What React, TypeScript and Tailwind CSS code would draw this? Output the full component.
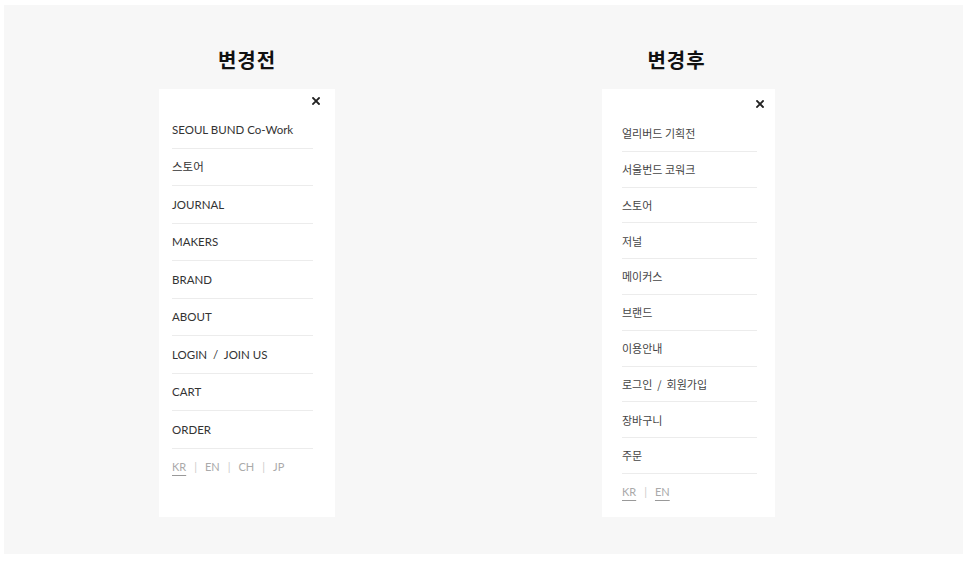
import React from "react";

const leftItems = [
  "SEOUL BUND Co-Work",
  "스토어",
  "JOURNAL",
  "MAKERS",
  "BRAND",
  "ABOUT",
  "LOGIN  /  JOIN US",
  "CART",
  "ORDER",
];

const rightItems = [
  "얼리버드 기획전",
  "서울번드 코워크",
  "스토어",
  "저널",
  "메이커스",
  "브랜드",
  "이용안내",
  "로그인  /  회원가입",
  "장바구니",
  "주문",
];

function CloseX() {
  return (
    <svg width="8" height="8" viewBox="0 0 8 8" className="block">
      <path d="M1 1 L7 7 M7 1 L1 7" stroke="#222" strokeWidth="1.8" strokeLinecap="square" />
    </svg>
  );
}

export default function App() {
  const font = { fontFamily: "Lato, 'Noto Sans CJK KR', sans-serif" };
  return (
    <div className="w-[970px] h-[561px] bg-white pl-[4px] pt-[5px]" style={font}>
      <div className="w-[959px] h-[549px] bg-[#f7f7f7] flex">
        {/* Left column */}
        <div className="ml-[155px] w-[176px] pt-[41px] flex flex-col">
          <div className="h-[28px] mb-[15px] flex items-center justify-center text-[20px] font-bold text-[#111] tracking-[1px]" style={{ fontFamily: "'Noto Sans CJK KR', sans-serif" }}>
            변경전
          </div>
          <div className="relative h-[428px] bg-white pt-[22px] pl-[13px] pr-[22px]">
            <div className="absolute right-[15px] top-[8px]">
              <CloseX />
            </div>
            {leftItems.map((t) => (
              <div
                key={t}
                className="h-[37.5px] flex items-center border-b border-[#ececec] text-[11.5px] text-[#333] whitespace-pre"
              >
                {t}
              </div>
            ))}
            <div className="h-[38px] flex items-center gap-[8px] text-[11px] text-[#aaa]">
              <span className="underline decoration-[#999] underline-offset-[4px]">KR</span>
              <span className="text-[#ccc]">|</span>
              <span>EN</span>
              <span className="text-[#ccc]">|</span>
              <span>CH</span>
              <span className="text-[#ccc]">|</span>
              <span>JP</span>
            </div>
          </div>
        </div>

        {/* Right column */}
        <div className="ml-[267px] w-[173px] pt-[41px] flex flex-col">
          <div className="h-[28px] mb-[15px] flex items-center justify-center pr-[24px] text-[20px] font-bold text-[#111] tracking-[1px]" style={{ fontFamily: "'Noto Sans CJK KR', sans-serif" }}>
            변경후
          </div>
          <div className="relative h-[428px] bg-white pt-[27px] pl-[20px] pr-[18px]" style={{ fontFamily: "'Noto Sans CJK KR', sans-serif" }}>
            <div className="absolute right-[11px] top-[11px]">
              <CloseX />
            </div>
            {rightItems.map((t) => (
              <div
                key={t}
                className="h-[35.8px] flex items-center border-b border-[#ececec] text-[11px] text-[#444] whitespace-pre"
              >
                {t}
              </div>
            ))}
            <div className="h-[36px] flex items-center gap-[8px] text-[11px] text-[#aaa]" style={font}>
              <span className="underline decoration-[#999] underline-offset-[4px]">KR</span>
              <span className="text-[#ccc]">|</span>
              <span className="underline decoration-[#999] underline-offset-[4px]">EN</span>
            </div>
          </div>
        </div>
      </div>
    </div>
  );
}
